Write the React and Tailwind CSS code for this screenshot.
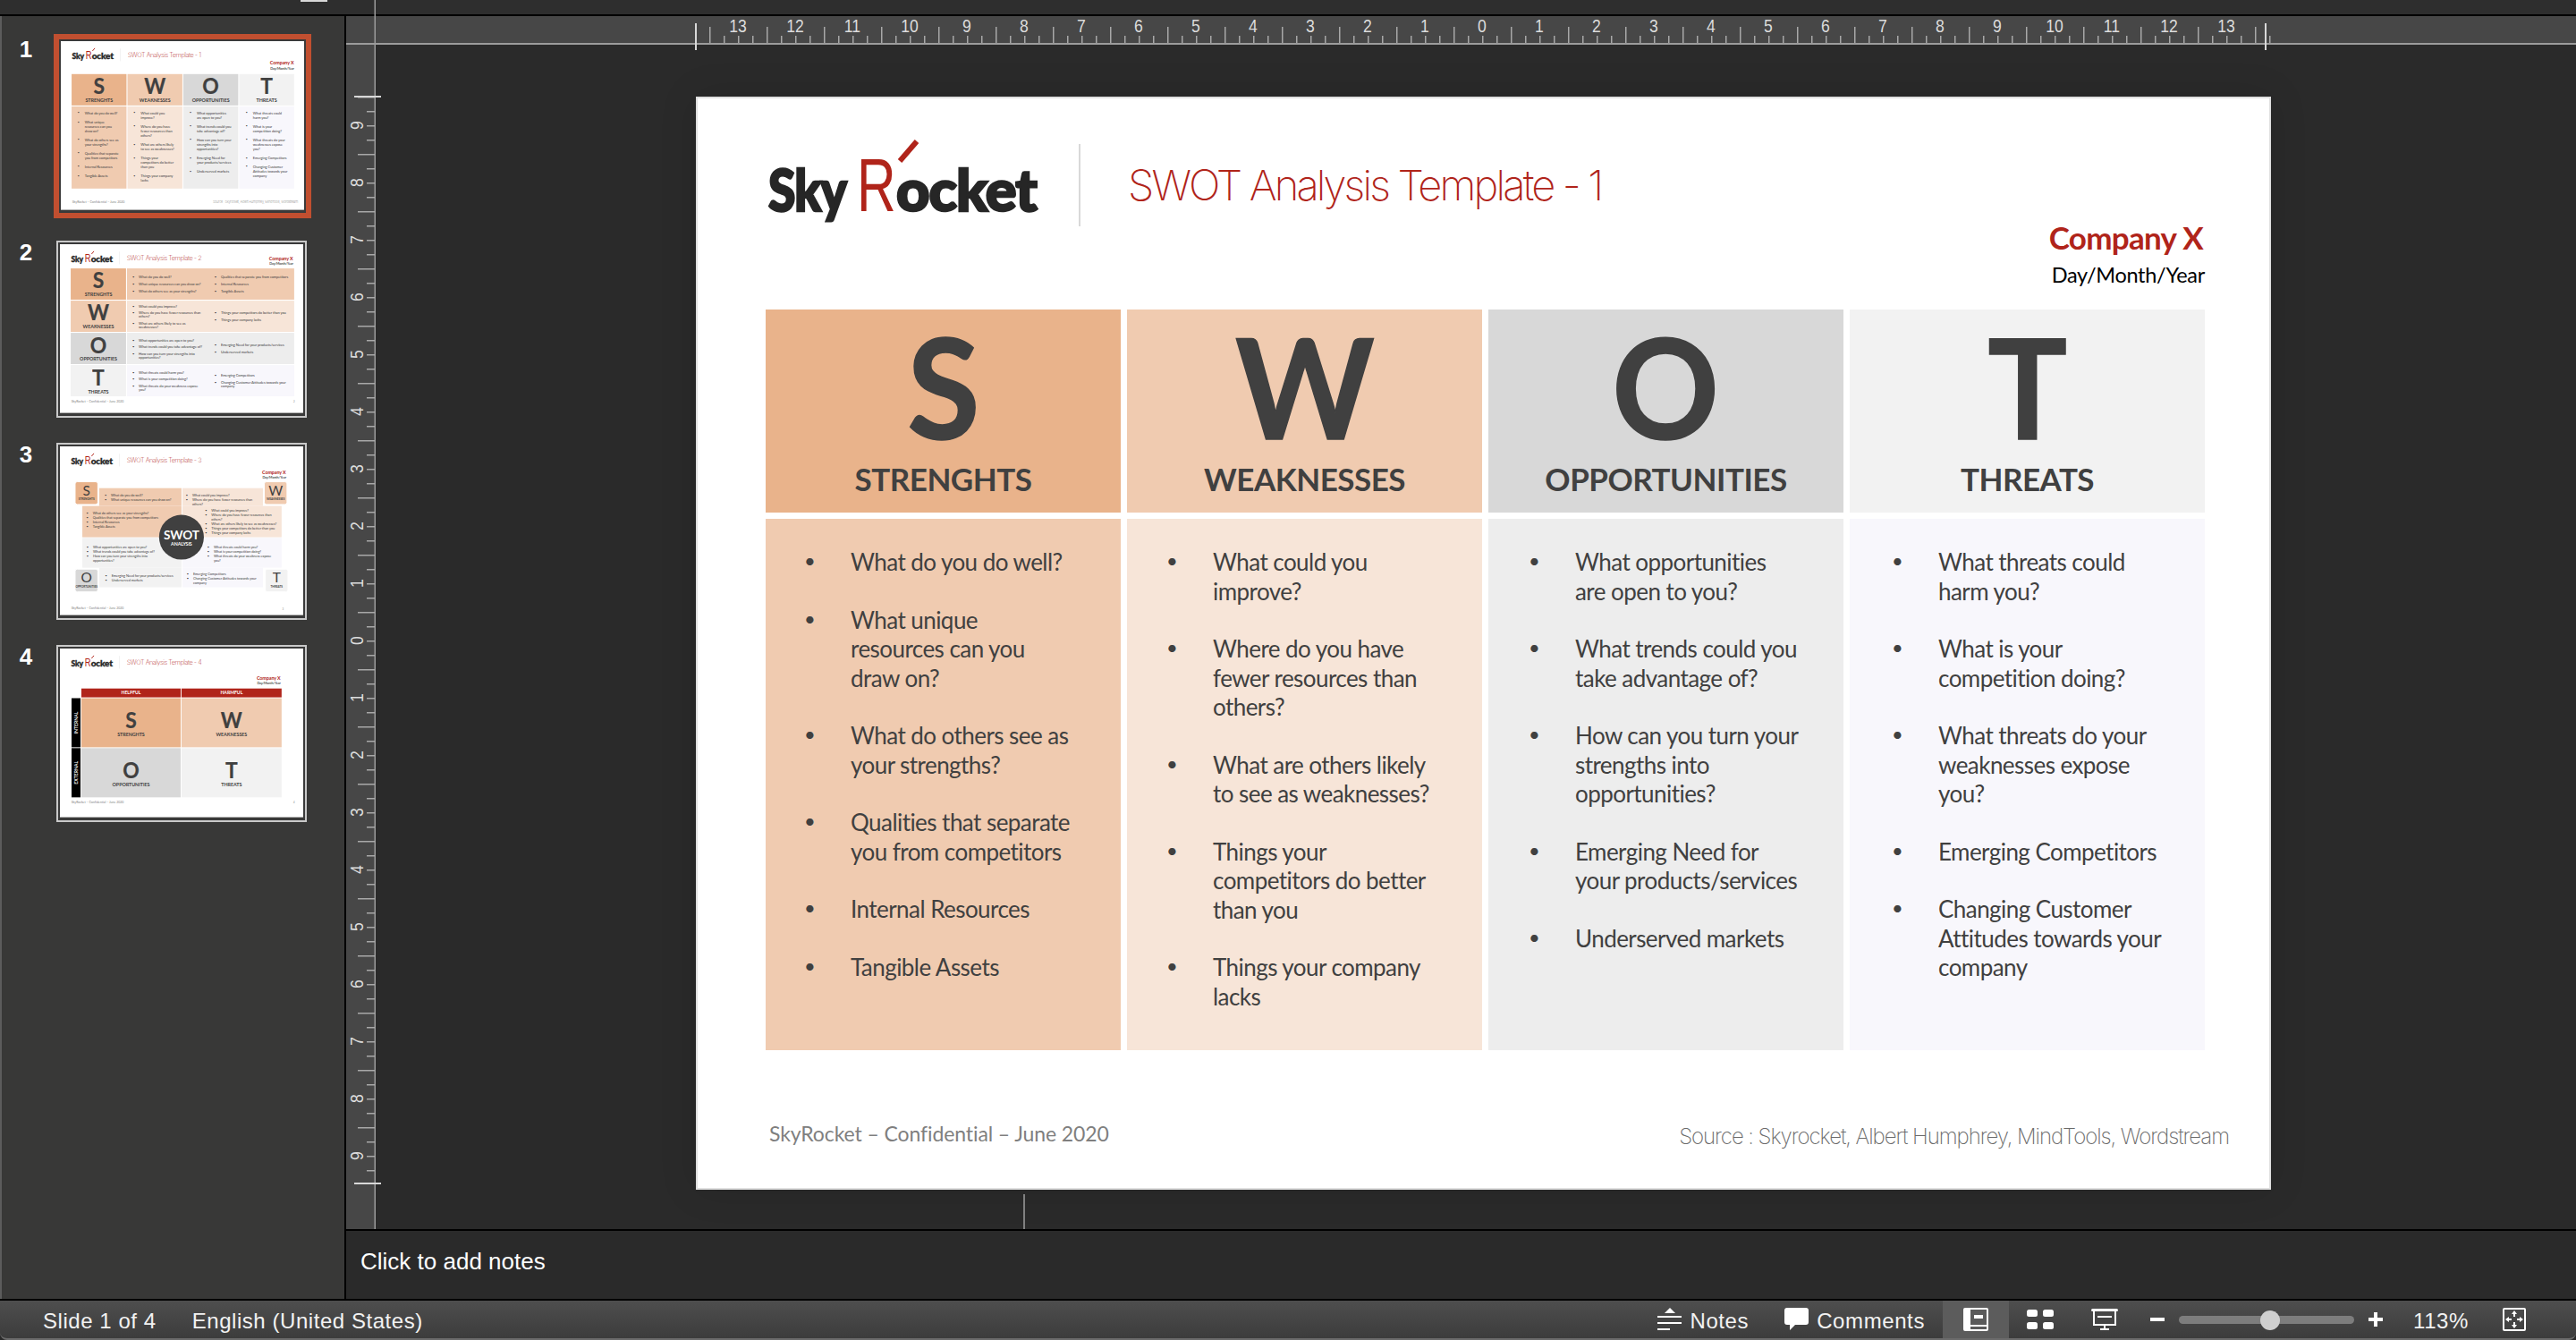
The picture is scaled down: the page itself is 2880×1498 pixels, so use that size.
import React from "react";

const calibri = "font-['Lato','Open_Sans',sans-serif]";
const helv = "font-['Liberation_Sans',Arial,sans-serif]";
const thin = "font-['Inter','Roboto',sans-serif]";

const columns = [
  {
    letter: "S", label: "STRENGHTS", head: "bg-[#e9b38b]", body: "bg-[#f0cbb0]", pad: "pl-[95px]",
    items: [["What do you do well?"], ["What unique", "resources can you", "draw on?"], ["What do others see as", "your strengths?"], ["Qualities that separate", "you from competitors"], ["Internal Resources"], ["Tangible Assets"]],
  },
  {
    letter: "W", label: "WEAKNESSES", head: "bg-[#f0cbb0]", body: "bg-[#f7e5d8]", pad: "pl-[96px]",
    items: [["What could you", "improve?"], ["Where do you have", "fewer resources than", "others?"], ["What are others likely", "to see as weaknesses?"], ["Things your", "competitors do better", "than you"], ["Things your company", "lacks"]],
  },
  {
    letter: "O", label: "OPPORTUNITIES", head: "bg-[#d8d8d8]", body: "bg-[#ededed]", pad: "pl-[97px]",
    items: [["What opportunities", "are open to you?"], ["What trends could you", "take advantage of?"], ["How can you turn your", "strengths into", "opportunities?"], ["Emerging Need for", "your products/services"], ["Underserved markets"]],
  },
  {
    letter: "T", label: "THREATS", head: "bg-[#f2f2f2]", body: "bg-[#f8f7fc]", pad: "pl-[99px]",
    items: [["What threats could", "harm you?"], ["What is your", "competition doing?"], ["What threats do your", "weaknesses expose", "you?"], ["Emerging Competitors"], ["Changing Customer", "Attitudes towards your", "company"]],
  },
];

function Logo() {
  return (
    <div className="relative flex items-baseline w-[302px] h-[80px] text-[#262626] font-['Lato',sans-serif] font-black">
      <span className="inline-block w-[100px] text-[65px] leading-[80px] origin-left scale-x-[0.85] tracking-[-1px] [-webkit-text-stroke:2.5px_#262626]">Sky</span>
      <span className={`inline-block w-[44px] -ml-[1px] text-[84px] leading-[80px] font-normal text-[#b0241a] origin-left scale-x-[0.72] ${helv}`}>R</span>
      <span className="inline-block w-[160px] text-[65px] leading-[80px] origin-left scale-x-[1.0] tracking-[-1px] [-webkit-text-stroke:2.5px_#262626]">ocket</span>
      <svg className="absolute left-[145px] -top-[11px]" width="24" height="26" viewBox="0 0 24 26">
        <path d="M2 24 L21 2" stroke="#b0241a" strokeWidth="6" fill="none" />
      </svg>
    </div>
  );
}

function Header({ n, box, pad }) {
  return (
    <div className={`flex justify-between ${box}`}>
      <div className="flex items-center h-[92px] mt-[53px] ml-[81px]">
        <Logo />
        <div className="w-[2px] h-[92px] ml-[45px] bg-[#d9d9d9]" />
        <div className={`ml-[53px] text-[47px] leading-[60px] tracking-[-2.85px] font-extralight text-[#b0241a] whitespace-nowrap ${thin}`}>
          SWOT Analysis Template - {n}
        </div>
      </div>
      <div className={`flex flex-col items-end ${pad} ${calibri}`}>
        <div className="text-[35px] leading-[40px] font-bold text-[#b0241a] tracking-[-0.7px] pr-[2px]">Company X</div>
        <div className="text-[23.5px] leading-[32px] mt-[6px] text-black tracking-[-0.3px]">Day/Month/Year</div>
      </div>
    </div>
  );
}

function Confidential() {
  return <div className={`text-[23px] leading-[30px] text-[#7f7f7f] -tracking-[0.1px] whitespace-nowrap ${calibri}`}>SkyRocket – Confidential – June 2020</div>;
}

function Footer({ n }) {
  return (
    <div className="flex justify-between items-center mt-[20px] pl-[82px] pr-[60px]">
      <Confidential />
      <div className={`text-[18px] text-[#7f7f7f] ${calibri}`}>{n}</div>
    </div>
  );
}

function BigLetter({ c }) {
  return (
    <>
      <div className="text-[156px] leading-[160px] h-[162px] font-bold scale-x-[0.95] [-webkit-text-stroke:1.5px_#404040]">{c.letter}</div>
      <div className="text-[35px] leading-[44px] tracking-[-0.5px] whitespace-nowrap font-bold">{c.label}</div>
    </>
  );
}

function Slide1() {
  return (
    <div className="w-[1759px] h-[1220px] bg-white flex flex-col">
      <Header n={1} box="h-[238px]" pad="pt-[137px] pr-[72px]" />
      <div className="grid grid-cols-4 gap-x-[7px] gap-y-[7px] ml-[78px] w-[1609px] grid-rows-[227px_594px]">
        {columns.map((c) => (
          <div key={c.letter} className={`${c.head} flex flex-col items-center pt-[5px] ${calibri} text-[#404040]`}>
            <BigLetter c={c} />
          </div>
        ))}
        {columns.map((c) => (
          <ul key={c.letter} className={`${c.body} ${c.pad} pt-[32px] flex flex-col gap-y-[32px] text-[#404040] text-[26px] leading-[32.5px] tracking-[-0.55px] ${calibri}`}>
            {c.items.map((lines) => (
              <li key={lines[0]} className="relative whitespace-nowrap">
                <span className="absolute -left-[52px] top-[-1px] text-[22px]">•</span>
                {lines.map((l) => (
                  <div key={l}>{l}</div>
                ))}
              </li>
            ))}
          </ul>
        ))}
      </div>
      <div className="flex justify-between items-start mt-[78px] pl-[82px] pr-[45px]">
        <Confidential />
        <div className={`text-[24px] leading-[30px] mt-[4px] font-extralight text-[#6a6a6a] tracking-[-1.06px] whitespace-nowrap ${thin}`}>
          Source : Skyrocket, Albert Humphrey, MindTools, Wordstream
        </div>
      </div>
    </div>
  );
}

const rows = [
  { c: columns[0], left: [["What do you do well?"], ["What unique resources can you draw on?"], ["What do others see as your strengths?"]], right: [["Qualities that separate you from competitors"], ["Internal Resources"], ["Tangible Assets"]] },
  { c: columns[1], left: [["What could you improve?"], ["Where do you have fewer resources than", "others?"], ["What are others likely to see as", "weaknesses?"]], right: [["Things your competitors do better than you"], ["Things your company lacks"]] },
  { c: columns[2], left: [["What opportunities are open to you?"], ["What trends could you take advantage of?"], ["How can you turn your strengths into", "opportunities?"]], right: [["Emerging Need for your products/services"], ["Underserved markets"]] },
  { c: columns[3], left: [["What threats could harm you?"], ["What is your competition doing?"], ["What threats do your weakness expose", "you?"]], right: [["Emerging Competitors"], ["Changing Customer Attitudes towards your", "company"]] },
];

function MiniList({ items, w }) {
  return (
    <ul className={`flex flex-col gap-y-[26px] text-[#404040] text-[26px] leading-[24px] tracking-[-0.55px] ${w} ${calibri}`}>
      {items.map((lines) => (
        <li key={lines[0]} className="relative pl-[46px] whitespace-nowrap">
          <span className="absolute left-0">•</span>
          {lines.map((l) => (
            <div key={l}>{l}</div>
          ))}
        </li>
      ))}
    </ul>
  );
}

function Slide2() {
  return (
    <div className="w-[1759px] h-[1220px] bg-white flex flex-col">
      <Header n={2} box="h-[175px]" pad="pt-[80px] pr-[72px]" />
      <div className="flex flex-col gap-y-[7px] ml-[78px] w-[1616px]">
        {rows.map(({ c, left, right }) => (
          <div key={c.letter} className="flex gap-x-[7px] h-[226px]">
            <div className={`${c.head} w-[400px] flex flex-col items-center pt-[5px] text-[#404040] ${calibri}`}>
              <BigLetter c={c} />
            </div>
            <div className={`${c.body} flex-1 flex items-center pl-[39px]`}>
              <MiniList items={left} w="w-[594px]" />
              <MiniList items={right} w="w-[570px]" />
            </div>
          </div>
        ))}
      </div>
      <Footer n={2} />
    </div>
  );
}

function Box({ letter, label, bg, cls }) {
  return (
    <div className={`absolute w-[170px] h-[170px] rounded-[18px] border-[6px] border-white flex flex-col items-center text-[#404040] ${bg} ${cls} ${calibri}`}>
      <div className="text-[100px] leading-[110px] font-normal">{letter}</div>
      <div className="text-[20px] leading-[24px] font-bold whitespace-nowrap">{label}</div>
    </div>
  );
}

function Note({ items, cls, bullet }) {
  return (
    <ul className={`absolute ${cls} text-[#404040] text-[25px] leading-[32.4px] tracking-[-0.4px] whitespace-nowrap ${calibri}`}>
      {items.map((l, i) => (
        <li key={i} className="relative">
          {bullet[i] !== false && <span className="absolute -left-[46px]">•</span>}
          {l}
        </li>
      ))}
    </ul>
  );
}

function Slide3() {
  return (
    <div className="relative w-[1759px] h-[1220px] bg-white">
      <Header n={3} box="h-[250px]" pad="pt-[165px] pr-[123px]" />
      <div className="absolute left-[284px] top-[302px] w-[595px] h-[129px] bg-[#f0cbb0]" />
      <div className="absolute left-[162px] top-[431px] w-[717px] h-[226px] bg-[#f0cbb0]" />
      <div className="absolute left-[162px] top-[661px] w-[717px] h-[216px] bg-[#f2f2f2]" />
      <div className="absolute left-[284px] top-[877px] w-[595px] h-[142px] bg-[#f2f2f2]" />
      <div className="absolute left-[886px] top-[302px] w-[582px] h-[129px] bg-[#f7e5d8]" />
      <div className="absolute left-[886px] top-[431px] w-[717px] h-[226px] bg-[#f7e5d8]" />
      <div className="absolute left-[886px] top-[661px] w-[717px] h-[216px] bg-[#f8f7fc]" />
      <div className="absolute left-[886px] top-[877px] w-[582px] h-[142px] bg-[#f8f7fc]" />
      <Note cls="left-[369px] top-[335px]" bullet={[]} items={["What do you do well?", "What unique resources can you draw on?"]} />
      <Note cls="left-[237px] top-[464px]" bullet={[]} items={["What do others see as your strengths?", "Qualities that separate you from competitors", "Internal Resources", "Tangible Assets"]} />
      <Note cls="left-[957px] top-[335px]" bullet={[true, true, false]} items={["What could you improve?", "Where do you have fewer resources than", "others?"]} />
      <Note cls="left-[1095px] top-[445px]" bullet={[true, true, false, true, true, true]} items={["What could you improve?", "Where do you have fewer resources than", "others?", "What are others likely to see as weaknesses?", "Things your competitors do better than you", "Things your company lacks"]} />
      <Note cls="left-[239px] top-[710px]" bullet={[true, true, true, false]} items={["What opportunities are open to you?", "What trends could you take advantage of?", "How can you turn your strengths into", "opportunities?"]} />
      <Note cls="left-[373px] top-[917px]" bullet={[]} items={["Emerging Need for your products/services", "Underserved markets"]} />
      <Note cls="left-[1112px] top-[710px]" bullet={[true, true, true, false]} items={["What threats could harm you?", "What is your competition doing?", "What threats do your weakness expose", "you?"]} />
      <Note cls="left-[963px] top-[904px]" bullet={[true, true, false]} items={["Emerging Competitors", "Changing Customer Attitudes towards your", "company"]} />
      <Box letter="S" label="STRENGHTS" bg="bg-[#e9b38b]" cls="left-[107px] top-[253px]" />
      <Box letter="W" label="WEAKNESSES" bg="bg-[#f0cbb0]" cls="left-[1475px] top-[253px]" />
      <Box letter="O" label="OPPORTUNITIES" bg="bg-[#d8d8d8]" cls="left-[107px] top-[885px]" />
      <Box letter="T" label="THREATS" bg="bg-[#f2f2f2]" cls="left-[1482px] top-[885px]" />
      <div className={`absolute left-[717px] top-[495px] w-[324px] h-[324px] rounded-full bg-[#404040] flex flex-col items-center justify-center text-white font-bold ${calibri}`}>
        <div className="text-[88px] leading-[90px] tracking-[-1px]">SWOT</div>
        <div className="text-[34px] leading-[40px] tracking-[-0.5px]">ANALYSIS</div>
      </div>
      <div className="absolute left-[82px] top-[1155px]"><Confidential /></div>
      <div className={`absolute left-[1608px] top-[1165px] text-[18px] text-[#7f7f7f] ${calibri}`}>3</div>
    </div>
  );
}

function Cell({ c }) {
  return (
    <div className={`${c.head} flex flex-col items-center pt-[75px] text-[#404040] ${calibri}`}>
      <BigLetter c={c} />
    </div>
  );
}

function Slide4() {
  return (
    <div className="w-[1759px] h-[1220px] bg-white flex flex-col">
      <Header n={4} box="h-[289px]" pad="pt-[190px] pr-[162px]" />
      <div className="grid grid-cols-[65px_718px_724px] gap-[6px] ml-[84px] grid-rows-[64px_355px_356px]">
        <div />
        <div className={`bg-[#b0241a] text-white font-bold text-[33px] flex items-center justify-center ${calibri}`}>HELPFUL</div>
        <div className={`bg-[#b0241a] text-white font-bold text-[33px] flex items-center justify-center ${calibri}`}>HARMFUL</div>
        <div className={`bg-black text-white font-bold text-[33px] flex items-center justify-center ${calibri}`}><span className="-rotate-90">INTERNAL</span></div>
        <Cell c={columns[0]} />
        <Cell c={columns[1]} />
        <div className={`bg-black text-white font-bold text-[33px] flex items-center justify-center ${calibri}`}><span className="-rotate-90">EXTERNAL</span></div>
        <Cell c={columns[2]} />
        <Cell c={columns[3]} />
      </div>
      <Footer n={4} />
    </div>
  );
}

function Thumb({ n, selected, children }) {
  return (
    <div className={`flex items-start ${selected ? "-mb-[3px]" : ""}`}>
      <div className={`w-[54px] mr-[2px] text-center text-white font-bold text-[26px] leading-[26px] ${helv} ${selected ? "pt-[4px]" : ""}`}>{n}</div>
      {selected ? (
        <div className="ml-[2px] border-[6px] border-[#c14f30]">
          <div className="border-2 border-[#3a3a3a]">
            <div className="w-[272px] h-[190px] overflow-hidden">
              <div className="origin-top-left scale-[0.1546]">{children}</div>
            </div>
          </div>
        </div>
      ) : (
        <div className="ml-[5px] border-2 border-[#c9c9c9]">
          <div className="border-2 border-[#3a3a3a]">
            <div className="w-[272px] h-[190px] overflow-hidden">
              <div className="origin-top-left scale-[0.1546]">{children}</div>
            </div>
          </div>
        </div>
      )}
    </div>
  );
}

function TopRuler() {
  const ticks = [];
  for (let k = -55; k <= 55; k++) {
    const x = 1657 + k * 16;
    const half = ((k % 4) + 4) % 4 === 2;
    ticks.push(<rect key={k} x={x} y={half ? 30 : 40} width="1.5" height={half ? 18 : 8} fill="#a8a8a8" />);
  }
  const nums = [];
  for (let k = -13; k <= 13; k++) {
    nums.push(
      <text key={k} x={1657 + k * 64} y={36} textAnchor="middle" fontSize="20" fill="#dcdcdc" transform={`translate(${(1657 + k * 64) * 0.12} 0) scale(0.88 1)`} fontFamily="Liberation Sans">
        {Math.abs(k)}
      </text>
    );
  }
  return (
    <svg className="block overflow-visible" width="2493" height="32" viewBox="387 18 2493 32">
      <rect x="387" y="48" width="2493" height="2" fill="#9c9c9c" />
      {ticks}
      {nums}
      <rect x="777" y="26" width="2" height="30" fill="#d8d8d8" />
      <rect x="2532" y="26" width="2" height="30" fill="#d8d8d8" />
    </svg>
  );
}

function LeftRuler() {
  const ticks = [];
  for (let k = -38; k <= 37; k++) {
    const y = 716 + k * 16;
    if (y < 108 || y > 1323) continue;
    const half = ((k % 4) + 4) % 4 === 2;
    ticks.push(<rect key={k} x={half ? 400 : 410} y={y} width={half ? 19 : 9} height="1.5" fill="#a8a8a8" />);
  }
  const nums = [];
  for (let k = -9; k <= 9; k++) {
    const y = 716 + k * 64;
    nums.push(
      <text key={k} transform={`translate(406 ${y}) rotate(-90) scale(0.88 1)`} textAnchor="middle" fontSize="20" fill="#dcdcdc" fontFamily="Liberation Sans">
        {Math.abs(k)}
      </text>
    );
  }
  return (
    <svg className="block overflow-visible" width="33" height="1324" viewBox="387 50 33 1324">
      <rect x="418.5" y="0" width="1.5" height="1374" fill="#9c9c9c" />
      {ticks}
      {nums}
      <rect x="396" y="107" width="30" height="2" fill="#d8d8d8" />
      <rect x="396" y="1322" width="30" height="2" fill="#d8d8d8" />
    </svg>
  );
}

function NotesIcon() {
  return (
    <svg width="28" height="26" viewBox="0 0 28 26" className="block">
      <path d="M8 6 L14 0 L20 6 Z" fill="#fff" />
      <rect x="0" y="9" width="27" height="2" fill="#fff" />
      <rect x="0" y="16" width="27" height="2" fill="#fff" />
      <rect x="0" y="23" width="14" height="2" fill="#fff" />
    </svg>
  );
}
function CommentIcon() {
  return (
    <svg width="28" height="26" viewBox="0 0 28 26" className="block">
      <path d="M3 0 H24 Q27 0 27 3 V16 Q27 19 24 19 H12 L6 25 V19 H3 Q0 19 0 16 V3 Q0 0 3 0 Z" fill="#fff" />
    </svg>
  );
}
function NormalIcon() {
  return (
    <svg width="28" height="26" viewBox="0 0 28 26" className="block">
      <rect width="28" height="26" rx="2" fill="#fff" />
      <rect x="8" y="2" width="18" height="17" fill="#5a5a5a" />
      <rect x="12" y="8" width="10" height="4" fill="#fff" />
      <rect x="8" y="21" width="18" height="3" fill="#5a5a5a" />
    </svg>
  );
}
function GridIcon() {
  return (
    <svg width="30" height="22" viewBox="0 0 30 22" className="block">
      <rect x="0" y="0" width="12" height="8" rx="2.5" fill="#fff" />
      <rect x="18" y="0" width="12" height="8" rx="2.5" fill="#fff" />
      <rect x="0" y="14" width="12" height="8" rx="2.5" fill="#fff" />
      <rect x="18" y="14" width="12" height="8" rx="2.5" fill="#fff" />
    </svg>
  );
}
function ShowIcon() {
  return (
    <svg width="30" height="24" viewBox="0 0 30 24" className="block">
      <rect x="0" y="0" width="30" height="3" rx="1.5" fill="#fff" />
      <rect x="3" y="2" width="24" height="16" fill="none" stroke="#fff" strokeWidth="2" />
      <rect x="7" y="8" width="16" height="2" fill="#fff" />
      <rect x="14" y="18" width="2" height="5" fill="#fff" />
      <rect x="10" y="22" width="10" height="2" fill="#fff" />
    </svg>
  );
}
function FitIcon() {
  return (
    <svg width="26" height="26" viewBox="0 0 26 26" className="block">
      <rect x="1" y="1" width="24" height="24" rx="1" fill="none" stroke="#fff" strokeWidth="2" />
      <path d="M13 3 L16 7 H14 V10 H12 V7 H10 Z M13 23 L16 19 H14 V16 H12 V19 H10 Z M3 13 L7 10 V12 H10 V14 H7 V16 Z M23 13 L19 10 V12 H16 V14 H19 V16 Z" fill="#fff" />
    </svg>
  );
}

export default function App() {
  return (
    <div className={`w-[2880px] h-[1498px] flex flex-col overflow-hidden bg-[#2a2a2a] text-white ${helv}`}>
      <div className="h-[18px] shrink-0 bg-[#2e2e2e] border-b-2 border-black">
        <div className="w-[30px] h-[2px] ml-[336px] bg-[#d8d8d8]" />
      </div>
      <div className="flex-1 flex min-h-0">
        <aside className="w-[387px] shrink-0 bg-[#383837] border-l-2 border-l-[#5c5c5c] border-r-2 border-r-black pt-[20px] flex flex-col gap-y-[28px]">
          <Thumb n={1} selected><Slide1 /></Thumb>
          <Thumb n={2}><Slide2 /></Thumb>
          <Thumb n={3}><Slide3 /></Thumb>
          <Thumb n={4}><Slide4 /></Thumb>
        </aside>
        <main className="flex-1 flex flex-col min-w-0">
          <div className="h-[32px] shrink-0 bg-[#474747]">
            <TopRuler />
          </div>
          <div className="flex-1 flex min-h-0">
            <div className="w-[33px] shrink-0 bg-[#474747]">
              <LeftRuler />
            </div>
            <div className="flex-1 min-w-0 pl-[358px] pt-[58px]">
              <div className="w-[1757px] h-[1218px] border-2 border-[#e0e0e0] box-content shadow-[0_0_40px_rgba(0,0,0,0.12)] overflow-hidden">
                <div className="-mt-[2px] -ml-[2px]"><Slide1 /></div>
              </div>
              <div className="w-[2px] h-[40px] ml-[366px] mt-[5px] bg-[#808080]" />
            </div>
          </div>
          <div className="h-[78px] shrink-0 border-t-2 border-black pl-[16px] pb-[8px] flex items-center text-[26px] text-white">
            Click to add notes
          </div>
        </main>
      </div>
      <footer className="h-[46px] shrink-0 border-t-2 border-black border-b-2 border-b-[#6b6b6b] rounded-b-[8px] bg-gradient-to-b from-[#4e4e4e] to-[#3c3c3c] flex items-stretch text-[24px] text-[#f2f2f2]">
        <div className="flex items-center pl-[48px] pt-[4px] gap-x-[40px] tracking-[0.55px]">
          <span>Slide 1 of 4</span>
          <span>English (United States)</span>
        </div>
        <div className="ml-auto flex items-center tracking-[0.6px]">
          <NotesIcon />
          <span className="ml-[8px] pt-[4px]">Notes</span>
          <div className="ml-[40px]"><CommentIcon /></div>
          <span className="ml-[8px] pt-[4px]">Comments</span>
          <div className="ml-[20px] w-[74px] self-stretch bg-[#5c5c5c] flex items-center justify-center"><NormalIcon /></div>
          <div className="ml-[20px]"><GridIcon /></div>
          <div className="ml-[42px]"><ShowIcon /></div>
          <div className="ml-[36px] w-[16px] h-[4px] bg-white" />
          <div className="relative ml-[16px] w-[196px] h-[9px] rounded-full bg-[#7d7d7d]">
            <div className="absolute left-[91px] -top-[6px] w-[22px] h-[22px] rounded-full bg-[#cfcfcf]" />
          </div>
          <div className="relative ml-[16px] w-[16px] h-[16px]">
            <div className="absolute left-0 top-[6px] w-[16px] h-[4px] bg-white" />
            <div className="absolute left-[6px] top-0 w-[4px] h-[16px] bg-white" />
          </div>
          <span className="ml-[34px] pt-[4px]">113%</span>
          <div className="ml-[38px] mr-[56px]"><FitIcon /></div>
        </div>
      </footer>
    </div>
  );
}
